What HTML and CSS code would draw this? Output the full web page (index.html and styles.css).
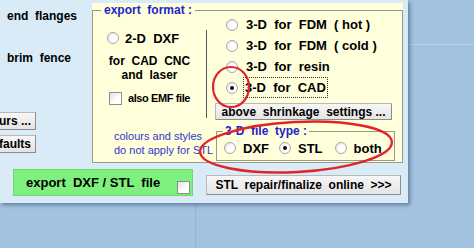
FILE: index.html
```html
<!DOCTYPE html>
<html lang="en">
<head>
    <meta charset="UTF-8">
    <title>Export format</title>
    <link rel="stylesheet" href="styles.css">
</head>
<body>
    <div class="window">
        <div class="upper">
            <div class="side">
                <div class="side-label first">end  flanges</div>
                <div class="side-label second">brim  fence</div>
                <div class="side-buttons">
                    <button class="btn side-btn">colours ...</button>
                    <button class="btn side-btn">defaults</button>
                </div>
            </div>

            <div class="export">
                <fieldset class="group">
                    <legend>export  format :</legend>
                    <div class="cols">
                        <div class="col-2d">
                            <div class="opt opt-2d"><span class="radio"></span>2-D  DXF</div>
                            <div class="note">for  CAD  CNC<br>and  laser</div>
                            <div class="check-row"><span class="check"></span>also EMF file</div>
                            <div class="hint">colours and styles<br>do not apply for STL</div>
                        </div>
                        <div class="sep"></div>
                        <div class="col-3d">
                            <div class="opt opt-3d"><span class="radio"></span>3-D  for  FDM  ( hot )</div>
                            <div class="opt opt-3d"><span class="radio"></span>3-D  for  FDM  ( cold )</div>
                            <div class="opt opt-3d"><span class="radio"></span>3-D  for  resin</div>
                            <div class="opt opt-3d"><span class="radio checked"></span><span class="focus">3-D  for  CAD</span></div>
                            <button class="btn btn-shrink">above  shrinkage  settings ...</button>
                            <fieldset class="group group-type">
                                <legend>3-D  file  type :</legend>
                                <div class="types">
                                    <span class="type"><span class="radio"></span>DXF</span>
                                    <span class="type"><span class="radio checked"></span>STL</span>
                                    <span class="type"><span class="radio"></span>both</span>
                                </div>
                            </fieldset>
                        </div>
                    </div>
                </fieldset>
            </div>
        </div>

        <div class="lower">
            <div class="export-btn">export  DXF / STL  file<span class="check"></span></div>
            <button class="btn btn-repair">STL  repair/finalize  online  &gt;&gt;&gt;</button>
        </div>
    </div>

    <!-- red hand-drawn marks over the dialog -->
    <svg class="marks" width="474" height="248" viewBox="0 0 474 248">
        <ellipse cx="231" cy="87" rx="18" ry="20" fill="none" stroke="#e0242a" stroke-width="2.2"/>
        <ellipse cx="296" cy="147" rx="96" ry="25" transform="rotate(-3 296 147)" fill="none" stroke="#e0242a" stroke-width="2.4"/>
    </svg>
</body>
</html>
```

FILE: styles.css
```css
body {
    margin: 0;
    width: 474px;
    height: 248px;
    overflow: hidden;
    position: relative;
    font-family: "Liberation Sans", Arial, sans-serif;
    font-weight: bold;
    font-size: 12px;
    color: #000;
    background:
        linear-gradient(#b7d0e8, #b7d0e8) 408px 44px / 66px 1px no-repeat,
        linear-gradient(#93b3d3, #93b3d3) 195px 203px / 1px 45px no-repeat,
        #a3c2e0;
}

.window {
    width: 408px;
    height: 203px;
    background-color: #d8ebf6;
    box-shadow: 2px 2px 4px rgba(20, 40, 80, 0.45);
    display: flex;
    flex-direction: column;
}

.upper {
    display: flex;
    height: 163px;
}

/* left strip */
.side {
    width: 92px;
    display: flex;
    flex-direction: column;
}

.side-label {
    padding-left: 7px;
    line-height: 14px;
    white-space: pre;
}

.side-label.first {
    margin-top: 9px;
}

.side-label.second {
    margin-top: 28px;
}

.side-buttons {
    margin-top: 47px;
    display: flex;
    flex-direction: column;
    gap: 5px;
}

.btn {
    font-family: "Liberation Sans", Arial, sans-serif;
    font-weight: bold;
    font-size: 12px;
    color: #000;
    background: linear-gradient(#f7f7f7, #e4e4e4);
    border: 1px solid #b9b9b9;
    border-right-color: #8c8c8c;
    border-bottom-color: #8c8c8c;
    border-radius: 0;
    padding: 0;
    margin: 0;
    white-space: pre;
}

.side-btn {
    width: 80px;
    height: 18px;
    margin-left: -44px;
    text-align: right;
    padding-right: 4px;
}

/* yellow export panel */
.export {
    width: 311px;
    margin-top: 3px;
    height: 160px;
    background-color: #ffffdc;
}

.group {
    margin: 0;
    padding: 0;
    border: 1px solid #9a9a8a;
    min-width: 0;
}

.group legend {
    color: #2424c8;
    line-height: 14px;
    padding: 0 3px;
    margin-left: 8px;
    white-space: pre;
}

.export > .group {
    height: 160px;
    box-sizing: border-box;
}

.cols {
    display: flex;
}

.col-2d {
    width: 113px;
    display: flex;
    flex-direction: column;
}

.opt {
    display: flex;
    align-items: center;
    white-space: pre;
}

.opt-2d {
    height: 20px;
    margin-top: 11px;
    padding-left: 14px;
    font-size: 13px;
    gap: 6px;
}

.note {
    margin-top: 6px;
    line-height: 14px;
    text-align: center;
    white-space: pre;
}

.check-row {
    display: flex;
    align-items: center;
    height: 16px;
    margin-top: 8px;
    padding-left: 16px;
    gap: 6px;
    font-size: 11px;
    letter-spacing: -0.4px;
}

.hint {
    margin-top: 23px;
    padding-left: 21px;
    line-height: 14px;
    font-size: 11px;
    font-weight: normal;
    color: #3434cc;
    white-space: nowrap;
}

.sep {
    width: 1px;
    height: 88px;
    margin-top: 13px;
    background-color: #555;
}

.col-3d {
    flex: 1;
    display: flex;
    flex-direction: column;
    margin-top: -3px;
}

.opt-3d {
    height: 21px;
    padding-left: 19px;
    font-size: 13px;
    gap: 8px;
}

.focus {
    outline: 1px dotted #333;
    line-height: 19px;
    padding: 0 1px;
    margin-left: -2px;
}

.btn-shrink {
    width: 177px;
    height: 17px;
    margin: 5px 0 0 8px;
}

.group-type {
    width: 177px;
    margin: 4px 0 0 9px;
    padding-bottom: 2px;
}

.group-type legend {
    margin-left: 6px;
    padding: 0 2px;
}

.types {
    display: flex;
    align-items: center;
    height: 20px;
    padding-left: 7px;
    font-size: 13px;
    white-space: nowrap;
}

.type {
    display: flex;
    align-items: center;
    gap: 7px;
    margin-right: 10px;
}

.type + .type {
    margin-right: 12px;
}

/* form glyphs */
.radio {
    width: 10px;
    height: 10px;
    border: 1px solid #a8a8a8;
    border-radius: 50%;
    background: radial-gradient(circle at 65% 65%, #ffffff 40%, #dcdcdc 100%);
    display: inline-flex;
    align-items: center;
    justify-content: center;
    flex-shrink: 0;
}

.radio.checked::after {
    content: "";
    width: 4px;
    height: 4px;
    border-radius: 50%;
    background-color: #111;
}

.check {
    width: 11px;
    height: 11px;
    border: 1px solid #8e8e8e;
    background: linear-gradient(135deg, #e0e0e0, #ffffff 60%);
    flex-shrink: 0;
}

/* bottom row */
.lower {
    display: flex;
    align-items: flex-start;
    height: 40px;
}

.export-btn {
    width: 180px;
    height: 27px;
    box-sizing: border-box;
    margin: 6px 0 0 13px;
    padding: 0 2px 0 12px;
    background-color: #7ef07e;
    border: 1px solid #6fd86f;
    font-size: 13px;
    white-space: pre;
    display: flex;
    align-items: center;
    justify-content: space-between;
}

.export-btn .check {
    margin-top: 9px;
}

.btn-repair {
    width: 195px;
    height: 20px;
    margin: 12px 0 0 13px;
}

.marks {
    position: absolute;
    left: 0;
    top: 0;
    pointer-events: none;
}
```
